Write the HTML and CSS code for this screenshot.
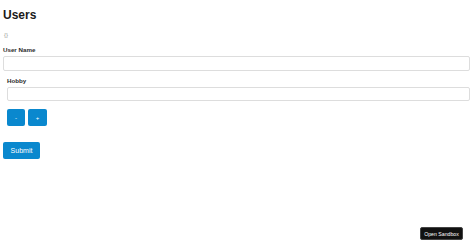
FILE: index.html
```html
<!DOCTYPE html>
<html lang="en">
<head>
<meta charset="utf-8">
<title>Users</title>
<link rel="stylesheet" href="styles.css">
</head>
<body>
<div class="app">
  <h1 class="title">Users</h1>
  <pre class="state">{}</pre>
  <form class="form">
    <div class="field">
      <label class="label">User Name</label>
      <input class="input" type="text">
    </div>
    <div class="group">
      <div class="field">
        <label class="label">Hobby</label>
        <input class="input" type="text">
      </div>
      <div class="actions">
        <button type="button" class="btn btn-small">-</button>
        <button type="button" class="btn btn-small">+</button>
      </div>
    </div>
    <button type="submit" class="btn btn-submit">Submit</button>
  </form>
</div>
<a class="sandbox" href="#">Open Sandbox</a>
</body>
</html>
```

FILE: styles.css
```css
* { box-sizing: border-box; }
html, body { margin: 0; padding: 0; background: #fff; }
body {
  font-family: "Liberation Sans", Arial, sans-serif;
  color: #111;
}
.app {
  padding: 8px 4px 0 3px;
}
.title {
  margin: 0;
  font-size: 12px;
  line-height: 14px;
  font-weight: bold;
  color: #1a1a1a;
}
.state {
  margin: 10px 0 0 1px;
  font-family: "Liberation Sans", Arial, sans-serif;
  font-size: 6px;
  line-height: 6px;
  color: #999;
}
.form {
  margin-top: 8px;
}
.field {
  display: flex;
  flex-direction: column;
}
.label {
  font-size: 6.2px;
  line-height: 7px;
  font-weight: bold;
  color: #2a2a2a;
  margin-bottom: 3px;
}
.input {
  height: 15px;
  width: 100%;
  border: 1px solid #ddd;
  border-radius: 2px;
  background: #fff;
  padding: 0 3px;
  margin: 0;
  font-size: 6px;
}
.group {
  margin-left: 4px;
  margin-top: 6px;
}
.group .input { height: 14px; }
.actions {
  display: flex;
  gap: 3px;
  margin-top: 8px;
}
.btn {
  background: #0a88ce;
  color: #fff;
  border: none;
  border-radius: 2px;
  font-family: "Liberation Sans", Arial, sans-serif;
  padding: 0;
  margin: 0;
  cursor: pointer;
}
.btn-small {
  width: 18px;
  height: 17px;
  font-size: 6px;
}
.btn-small + .btn-small { width: 19px; }
.btn-submit {
  margin-top: 16px;
  width: 37px;
  height: 17px;
  font-size: 7px;
}
.sandbox {
  position: fixed;
  right: 11px;
  bottom: 8px;
  width: 43px;
  height: 13px;
  display: flex;
  align-items: center;
  justify-content: center;
  background: #111;
  color: #fff;
  border: 1px solid #444;
  border-radius: 2px;
  font-size: 5.2px;
  text-decoration: none;
}
```
